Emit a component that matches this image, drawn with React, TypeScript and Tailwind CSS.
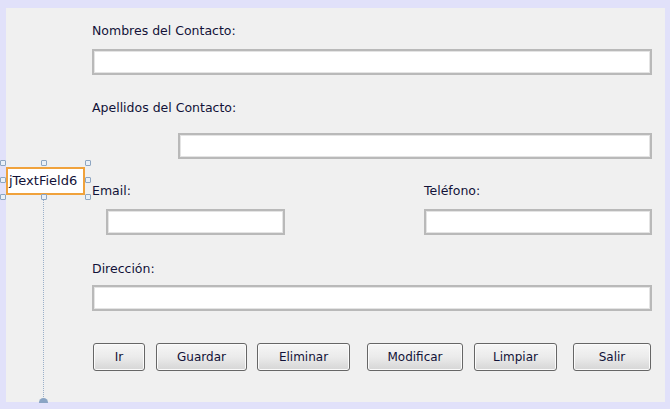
const font = { fontFamily: '"DejaVu Sans", "Liberation Sans", sans-serif' };

function Field({ className = "" }: { className?: string }) {
  return (
    <div
      className={`h-[26px] bg-white border-2 border-[#b9b9b9] shadow-[inset_0_0_0_1px_#e4e4e4] ${className}`}
    />
  );
}

function Label({ text }: { text: string }) {
  return (
    <div className="h-4 leading-4 text-[12.5px] text-[#121238]">{text}</div>
  );
}

function Boton({ text, className = "" }: { text: string; className?: string }) {
  return (
    <button
      type="button"
      className={`h-[28px] rounded-[3px] border border-[#666666] bg-gradient-to-b from-[#f6f6f6] via-[#ebebeb] to-[#d6d6d6] shadow-[inset_0_0_0_1px_#fbfbfb] text-[12px] text-[#121238] ${className}`}
    >
      {text}
    </button>
  );
}

function Handle({ className }: { className: string }) {
  return (
    <div
      className={`absolute w-[6px] h-[6px] rounded-[1px] border border-[#8ea6c2] bg-[#e9f0f8] ${className}`}
    />
  );
}

export default function App() {
  return (
    <div
      className="relative w-[670px] h-[409px] bg-[#e1e1fa] pt-[8px] pl-[6px] pr-[5px] pb-[7px]"
      style={font}
    >
      <div className="h-full bg-[#f0f0f0] pl-[86px] pr-[13px] flex flex-col">
        <div className="mt-[15px]">
          <Label text="Nombres del Contacto:" />
        </div>
        <Field className="mt-[10px]" />

        <div className="mt-[25px]">
          <Label text="Apellidos del Contacto:" />
        </div>
        <Field className="mt-[17px] ml-[86px]" />

        <div className="mt-[24px] flex">
          <div className="w-[332px]">
            <Label text="Email:" />
            <Field className="mt-[10px] ml-[14px] w-[179px]" />
          </div>
          <div className="flex-1">
            <Label text="Teléfono:" />
            <Field className="mt-[10px]" />
          </div>
        </div>

        <div className="mt-[26px]">
          <Label text="Dirección:" />
        </div>
        <Field className="mt-[8px]" />

        <div className="mt-[32px] flex">
          <Boton text="Ir" className="ml-[1px] w-[52px]" />
          <Boton text="Guardar" className="ml-[11px] w-[91px]" />
          <Boton text="Eliminar" className="ml-[10px] w-[93px]" />
          <Boton text="Modificar" className="ml-[17px] w-[96px]" />
          <Boton text="Limpiar" className="ml-[11px] w-[83px]" />
          <Boton text="Salir" className="ml-[16px] w-[78px]" />
        </div>
      </div>

      {/* selected component in the designer */}
      <div className="absolute left-[6px] top-[167px] w-[79px] h-[28px] border-2 border-[#f0a23c] bg-white overflow-hidden">
        <div className="pl-[1px] leading-[24px] text-[13px] text-[#121238] whitespace-nowrap">
          jTextField6
        </div>
      </div>
      <Handle className="left-[0px] top-[160px]" />
      <Handle className="left-[41px] top-[160px]" />
      <Handle className="left-[85px] top-[160px]" />
      <Handle className="left-[0px] top-[177px]" />
      <Handle className="left-[85px] top-[177px]" />
      <Handle className="left-[0px] top-[194px]" />
      <Handle className="left-[41px] top-[194px]" />
      <Handle className="left-[85px] top-[194px]" />

      {/* anchor guide */}
      <div className="absolute left-[43px] top-[200px] h-[199px] border-l border-dotted border-[#9bb0c9]" />
      <div className="absolute left-[39px] top-[398px] w-[9px] h-[5px] rounded-t-full bg-[#8aa4c4]" />
    </div>
  );
}
